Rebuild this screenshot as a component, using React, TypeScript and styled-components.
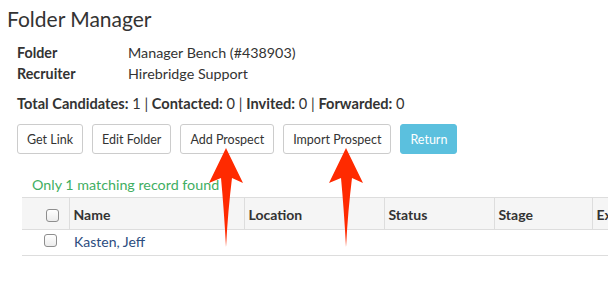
import React from 'react';
import styled, { createGlobalStyle } from 'styled-components';

const GlobalStyle = createGlobalStyle`
  html, body {
    margin: 0;
    padding: 0;
    background: #fff;
    overflow: hidden;
  }
  body {
    font-family: 'Lato', 'Liberation Sans', sans-serif;
    color: #333;
  }
`;

const Page = styled.div`
  position: relative;
  width: 608px;
  height: 298px;
  overflow: hidden;
`;

const Title = styled.h1`
  margin: 0;
  padding: 5px 0 0 7px;
  font-size: 21px;
  font-weight: 400;
  line-height: 28px;
  color: #333;
`;

const InfoGrid = styled.div`
  display: grid;
  grid-template-columns: 111px auto;
  margin: 9px 0 0 17px;
  font-size: 14.3px;
  line-height: 21px;
`;

const Label = styled.span`
  font-weight: 700;
`;

const Totals = styled.div`
  margin: 10px 0 0 17px;
  font-size: 14.6px;
  line-height: 20px;
  white-space: nowrap;

  b {
    font-weight: 700;
  }
`;

const Toolbar = styled.div`
  display: flex;
  gap: 9px;
  margin: 10px 0 0 17px;
`;

const Button = styled.button<{ $info?: boolean }>`
  height: 30px;
  padding: 0 9px;
  border: 1px solid ${(p) => (p.$info ? '#5bc0de' : '#ccc')};
  border-radius: 3px;
  background: ${(p) => (p.$info ? '#5bc0de' : '#fff')};
  color: ${(p) => (p.$info ? '#fff' : '#333')};
  font-family: inherit;
  font-size: 12.5px;
`;

const Found = styled.div`
  margin: 22px 0 0 32px;
  font-size: 14.3px;
  line-height: 18px;
  color: #3fae62;
`;

const Table = styled.table`
  margin: 3px 0 0 22px;
  border-collapse: collapse;
  table-layout: fixed;
  width: 640px;
  font-size: 14px;
`;

const HeadRow = styled.tr`
  height: 32px;
`;

const BodyRow = styled.tr`
  height: 26px;
`;

const Th = styled.th<{ $w: number }>`
  box-sizing: border-box;
  width: ${(p) => p.$w}px;
  padding: 1px 4px 0;
  background: #f5f5f5;
  border-top: 1px solid #ddd;
  border-bottom: 1px solid #ddd;
  border-left: 1px solid #ddd;
  text-align: left;
  font-weight: 700;
  color: #333;
  vertical-align: middle;
  white-space: nowrap;
  overflow: hidden;

  &:first-child {
    border-left: none;
  }
`;

const Td = styled.td`
  box-sizing: border-box;
  padding: 3px 5px 0;
  border-bottom: 1px solid #ddd;
  vertical-align: top;
  line-height: 18px;
`;

const CheckCell = styled.div<{ $shift: number }>`
  display: flex;
  justify-content: flex-end;
  padding-right: ${(p) => 6 + p.$shift}px;
  padding-top: ${(p) => (p.$shift ? 1 : 3)}px;
`;

const Check = styled.span`
  display: block;
  width: 11px;
  height: 11px;
  border: 1px solid #8e8e8e;
  border-radius: 3px;
  background: linear-gradient(#fff, #ececec);
`;

const NameLink = styled.a`
  color: #2b4c7e;
  text-decoration: none;
`;

const Arrows = styled.svg`
  position: absolute;
  left: 0;
  top: 0;
  pointer-events: none;
`;

const arrowPath = (x: number) =>
  `M${x} 148 L${x + 17} 183 L${x + 6} 178 Q${x + 2} 210 ${x} 247 Q${x - 2} 210 ${x - 5} 178 L${x - 17} 183 Z`;

export default function App() {
  return (
    <Page>
      <GlobalStyle />
      <Title>Folder Manager</Title>
      <InfoGrid>
        <Label>Folder</Label>
        <span>Manager Bench (#438903)</span>
        <Label>Recruiter</Label>
        <span>Hirebridge Support</span>
      </InfoGrid>
      <Totals>
        <b>Total Candidates:</b> 1 | <b>Contacted:</b> 0 | <b>Invited:</b> 0 | <b>Forwarded:</b> 0
      </Totals>
      <Toolbar>
        <Button>Get Link</Button>
        <Button>Edit Folder</Button>
        <Button>Add Prospect</Button>
        <Button>Import Prospect</Button>
        <Button $info>Return</Button>
      </Toolbar>
      <Found>Only 1 matching record found</Found>
      <Table>
        <thead>
          <HeadRow>
            <Th $w={47}>
              <CheckCell $shift={0}>
                <Check />
              </CheckCell>
            </Th>
            <Th $w={175}>Name</Th>
            <Th $w={140}>Location</Th>
            <Th $w={110}>Status</Th>
            <Th $w={98}>Stage</Th>
            <Th $w={70}>Expires</Th>
          </HeadRow>
        </thead>
        <tbody>
          <BodyRow>
            <Td>
              <CheckCell $shift={1}>
                <Check />
              </CheckCell>
            </Td>
            <Td>
              <NameLink href="#">Kasten, Jeff</NameLink>
            </Td>
            <Td />
            <Td />
            <Td />
            <Td />
          </BodyRow>
        </tbody>
      </Table>
      <Arrows width="608" height="298" viewBox="0 0 608 298">
        <path d={arrowPath(226)} fill="#ff2a00" />
        <path d={arrowPath(346)} fill="#ff2a00" />
      </Arrows>
    </Page>
  );
}
